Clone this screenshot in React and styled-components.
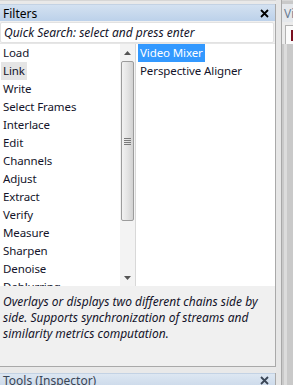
import React from "react";
import styled, { createGlobalStyle } from "styled-components";

const Global = createGlobalStyle`
  html, body { margin: 0; padding: 0; background: #e9e9e9; }
  * { box-sizing: border-box; }
`;

const FONT = `"Noto Sans", "Open Sans", sans-serif`;

const Screen = styled.div`
  width: 293px;
  height: 385px;
  overflow: hidden;
  display: flex;
  background: #e9e9e9;
  font-family: ${FONT};
  font-size: 11px;
  color: #14142a;
`;

const LeftDock = styled.div`
  width: 276px;
  flex: none;
  display: flex;
  flex-direction: column;
  padding-top: 3px;
  border-top: 1px solid #d6d6d6;
`;

const Panel = styled.div`
  flex: none;
  display: flex;
  flex-direction: column;
  border-right: 1px solid #a9a9a9;
  border-bottom: 1px solid #a9a9a9;
  background: #f0f0f0;
`;

const TitleBar = styled.div`
  height: ${(p) => p.$h || 17}px;
  flex: none;
  display: flex;
  align-items: center;
  justify-content: space-between;
  padding: 0 6px 0 3px;
  background: ${(p) =>
    p.$inactive
      ? "linear-gradient(#dde7f2, #cbd9ea)"
      : "linear-gradient(#d3e1f1, #bcd1ea)"};
  color: ${(p) => (p.$inactive ? "#3a4656" : "#000")};
  font-size: 12px;
  border-top: 1px solid #c3d2e4;
`;

const CloseX = styled.svg`
  width: 9px;
  height: 9px;
  flex: none;
`;

const SearchBox = styled.div`
  height: 21px;
  flex: none;
  margin: 1px 1px 0 0;
  background: #fff;
  border: 1px solid #e2e2e2;
  border-radius: 2px;
  display: flex;
  align-items: center;
  padding-left: 3px;
  font-style: italic;
  font-size: 12px;
  color: #14142a;
`;

const Lists = styled.div`
  height: 243px;
  flex: none;
  display: flex;
  background: #fff;
  border-top: 1px solid #e6e6e6;
`;

const ListCol = styled.div`
  width: ${(p) => p.$w}px;
  flex: none;
  display: flex;
  flex-direction: column;
  align-items: flex-start;
  overflow: hidden;
  padding-left: ${(p) => p.$pl}px;
`;

const Item = styled.div`
  height: 18px;
  line-height: 18px;
  padding: 0 2px;
  flex: none;
  white-space: nowrap;
  font-size: 11.5px;
  letter-spacing: -0.1px;
  background: ${(p) => (p.$sel ? "#3399ff" : p.$hover ? "#e5e5e5" : "transparent")};
  color: ${(p) => (p.$sel ? "#fff" : "#14142a")};
`;

const ScrollBar = styled.div`
  width: 16px;
  flex: none;
  display: flex;
  flex-direction: column;
  background: #f3f3f3;
  border-right: 1px solid #d8d8d8;
`;

const Arrow = styled.div`
  height: 17px;
  flex: none;
  display: flex;
  align-items: center;
  justify-content: center;
`;

const Thumb = styled.div`
  height: 160px;
  margin: 0 1px;
  flex: none;
  border: 1px solid #9c9c9c;
  border-radius: 2px;
  background: linear-gradient(90deg, #f2f2f2, #e4e4e4 50%, #d2d2d2);
  display: flex;
  align-items: center;
  justify-content: center;
`;

const Track = styled.div`
  flex: 1;
`;

const Description = styled.div`
  flex: none;
  height: 80px;
  padding: 8px 3px 0 3px;
  font-style: italic;
  font-size: 12px;
  line-height: 16px;
  color: #14142a;
  background: #f0f0f0;
`;

const Gap = styled.div`
  height: 6px;
  flex: none;
`;

const ToolsPanel = styled.div`
  border-right: 1px solid #a9a9a9;
  flex: 1;
`;

const Divider = styled.div`
  width: 6px;
  flex: none;
  background: #e6e6e6;
  border-right: 1px solid #a8a8a8;
`;

const RightDock = styled.div`
  flex: 1;
  display: flex;
  flex-direction: column;
  padding-top: 3px;
  background: #c9c9c9;
  border-top: 1px solid #d6d6d6;
`;

const RightTitle = styled.div`
  height: 18px;
  flex: none;
  background: #e5e8ec;
  color: #6a7c92;
  font-size: 12px;
  padding-left: 2px;
  display: flex;
  align-items: center;
`;

const RightTabArea = styled.div`
  height: 22px;
  flex: none;
  background: #ececec;
  padding: 3px 0 0 3px;
  display: flex;
`;

const RightTab = styled.div`
  flex: 1;
  background: #fbfbfb;
  border: 1px solid #b2b2b2;
  border-right: none;
  border-bottom: none;
  padding: 4px 0 0 5px;
`;

const RedMark = styled.div`
  width: 3px;
  height: 11px;
  background: #7a1020;
`;

const RightBody = styled.div`
  flex: 1;
  display: flex;
  padding-left: 2px;
`;

const RightStrip = styled.div`
  width: 3px;
  background: #dcdcdc;
`;

const X = ({ color = "#000" }) => (
  <CloseX viewBox="0 0 9 9">
    <path d="M1 1 L8 8 M8 1 L1 8" stroke={color} strokeWidth="1.8" />
  </CloseX>
);

const leftItems = [
  "Load", "Link", "Write", "Select Frames", "Interlace", "Edit", "Channels",
  "Adjust", "Extract", "Verify", "Measure", "Sharpen", "Denoise", "Deblurring",
];

export default function App() {
  return (
    <>
      <Global />
      <Screen>
        <LeftDock>
          <Panel>
            <TitleBar>
              <span>Filters</span>
              <X />
            </TitleBar>
            <SearchBox>Quick Search: select and press enter</SearchBox>
            <Lists>
              <ListCol $w={120} $pl={1}>
                {leftItems.map((t, i) => (
                  <Item key={t} $hover={i === 1}>{t}</Item>
                ))}
              </ListCol>
              <ScrollBar>
                <Arrow>
                  <svg width="7" height="4" viewBox="0 0 7 4">
                    <path d="M0 4 L3.5 0 L7 4 Z" fill="#555" />
                  </svg>
                </Arrow>
                <Thumb>
                  <svg width="7" height="7" viewBox="0 0 7 7">
                    <path d="M0 0.5 H7 M0 2.5 H7 M0 4.5 H7 M0 6.5 H7" stroke="#7a7a7a" strokeWidth="1" />
                  </svg>
                </Thumb>
                <Track />
                <Arrow>
                  <svg width="7" height="4" viewBox="0 0 7 4">
                    <path d="M0 0 L3.5 4 L7 0 Z" fill="#555" />
                  </svg>
                </Arrow>
              </ScrollBar>
              <ListCol $w={138} $pl={2}>
                <Item $sel>Video Mixer</Item>
                <Item>Perspective Aligner</Item>
              </ListCol>
            </Lists>
            <Description>
              Overlays or displays two different chains side by side. Supports
              synchronization of streams and similarity metrics computation.
            </Description>
          </Panel>
          <Gap />
          <ToolsPanel>
            <TitleBar $inactive $h={14}>
              <span>Tools (Inspector)</span>
              <X color="#3a4656" />
            </TitleBar>
          </ToolsPanel>
        </LeftDock>
        <Divider />
        <RightDock>
          <RightTitle>Vi</RightTitle>
          <RightTabArea>
            <RightTab>
              <RedMark />
            </RightTab>
          </RightTabArea>
          <RightBody>
            <RightStrip />
          </RightBody>
        </RightDock>
      </Screen>
    </>
  );
}
